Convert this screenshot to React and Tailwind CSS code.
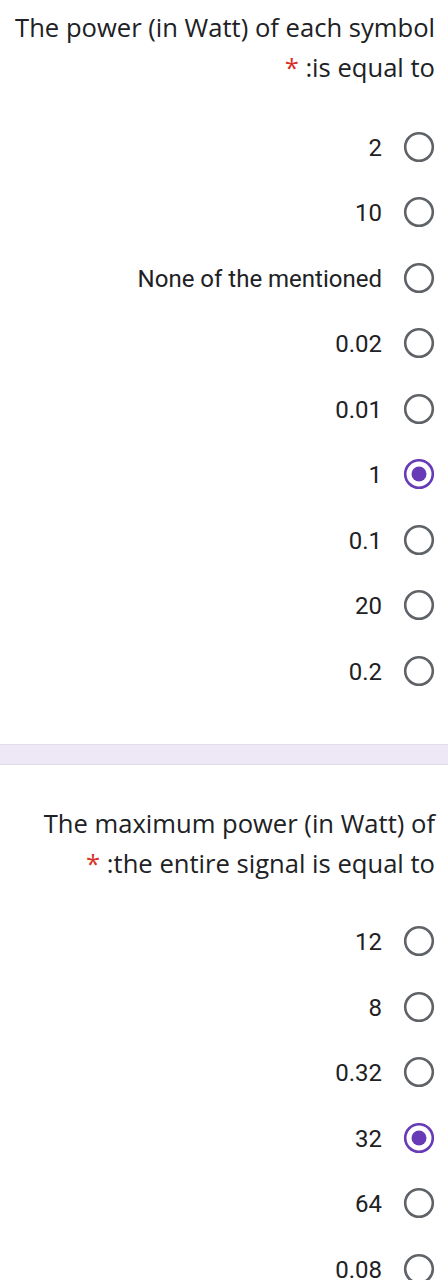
import React from "react";

const q1 = ["2", "10", "None of the mentioned", "0.02", "0.01", "1", "0.1", "20", "0.2"];
const q2 = ["12", "8", "0.32", "32", "64", "0.08"];

function Radio({ checked }) {
  return (
    <svg width="32" height="32" viewBox="0 0 32 32" className="shrink-0">
      <circle cx="16" cy="16" r="13.8" fill="none" stroke={checked ? "#673ab7" : "#5f6368"} strokeWidth="2.6" />
      {checked && <circle cx="16" cy="16" r="7.5" fill="#673ab7" />}
    </svg>
  );
}

function Option({ label, checked }) {
  return (
    <div className="flex h-[65.5px] items-center justify-end gap-[21px]">
      <span className="pt-[2px] text-[24px] text-[#202124]" style={{ fontFamily: "Roboto, sans-serif" }}>{label}</span>
      <Radio checked={checked} />
    </div>
  );
}

function Title({ l1, l2 }) {
  return (
    <div className="whitespace-nowrap text-right text-[25.6px] leading-[40px] text-[#202124]" style={{ fontFamily: "'Open Sans', sans-serif" }}>
      <div>{l1}</div>
      <div>
        <span className="text-[#d93025]">*</span> {l2}
      </div>
    </div>
  );
}

export default function App() {
  return (
    <div className="h-[1280px] w-[448px] overflow-hidden bg-white">
      <div className="pl-[8px] pr-[13px] pt-[8px]">
        <Title l1="The power (in Watt) of each symbol" l2=":is equal to" />
        <div className="mt-[26px] flex flex-col">
          {q1.map((o) => (
            <Option key={o} label={o} checked={o === "1"} />
          ))}
        </div>
      </div>
      <div className="mt-[40px] h-[21px] border-y border-[#e0dde6] bg-[#ede7f6]" />
      <div className="pl-[8px] pr-[13px] pt-[39px]">
        <Title l1="The maximum power (in Watt) of" l2=":the entire signal is equal to" />
        <div className="mt-[25px] flex flex-col">
          {q2.map((o) => (
            <Option key={o} label={o} checked={o === "32"} />
          ))}
        </div>
      </div>
    </div>
  );
}
